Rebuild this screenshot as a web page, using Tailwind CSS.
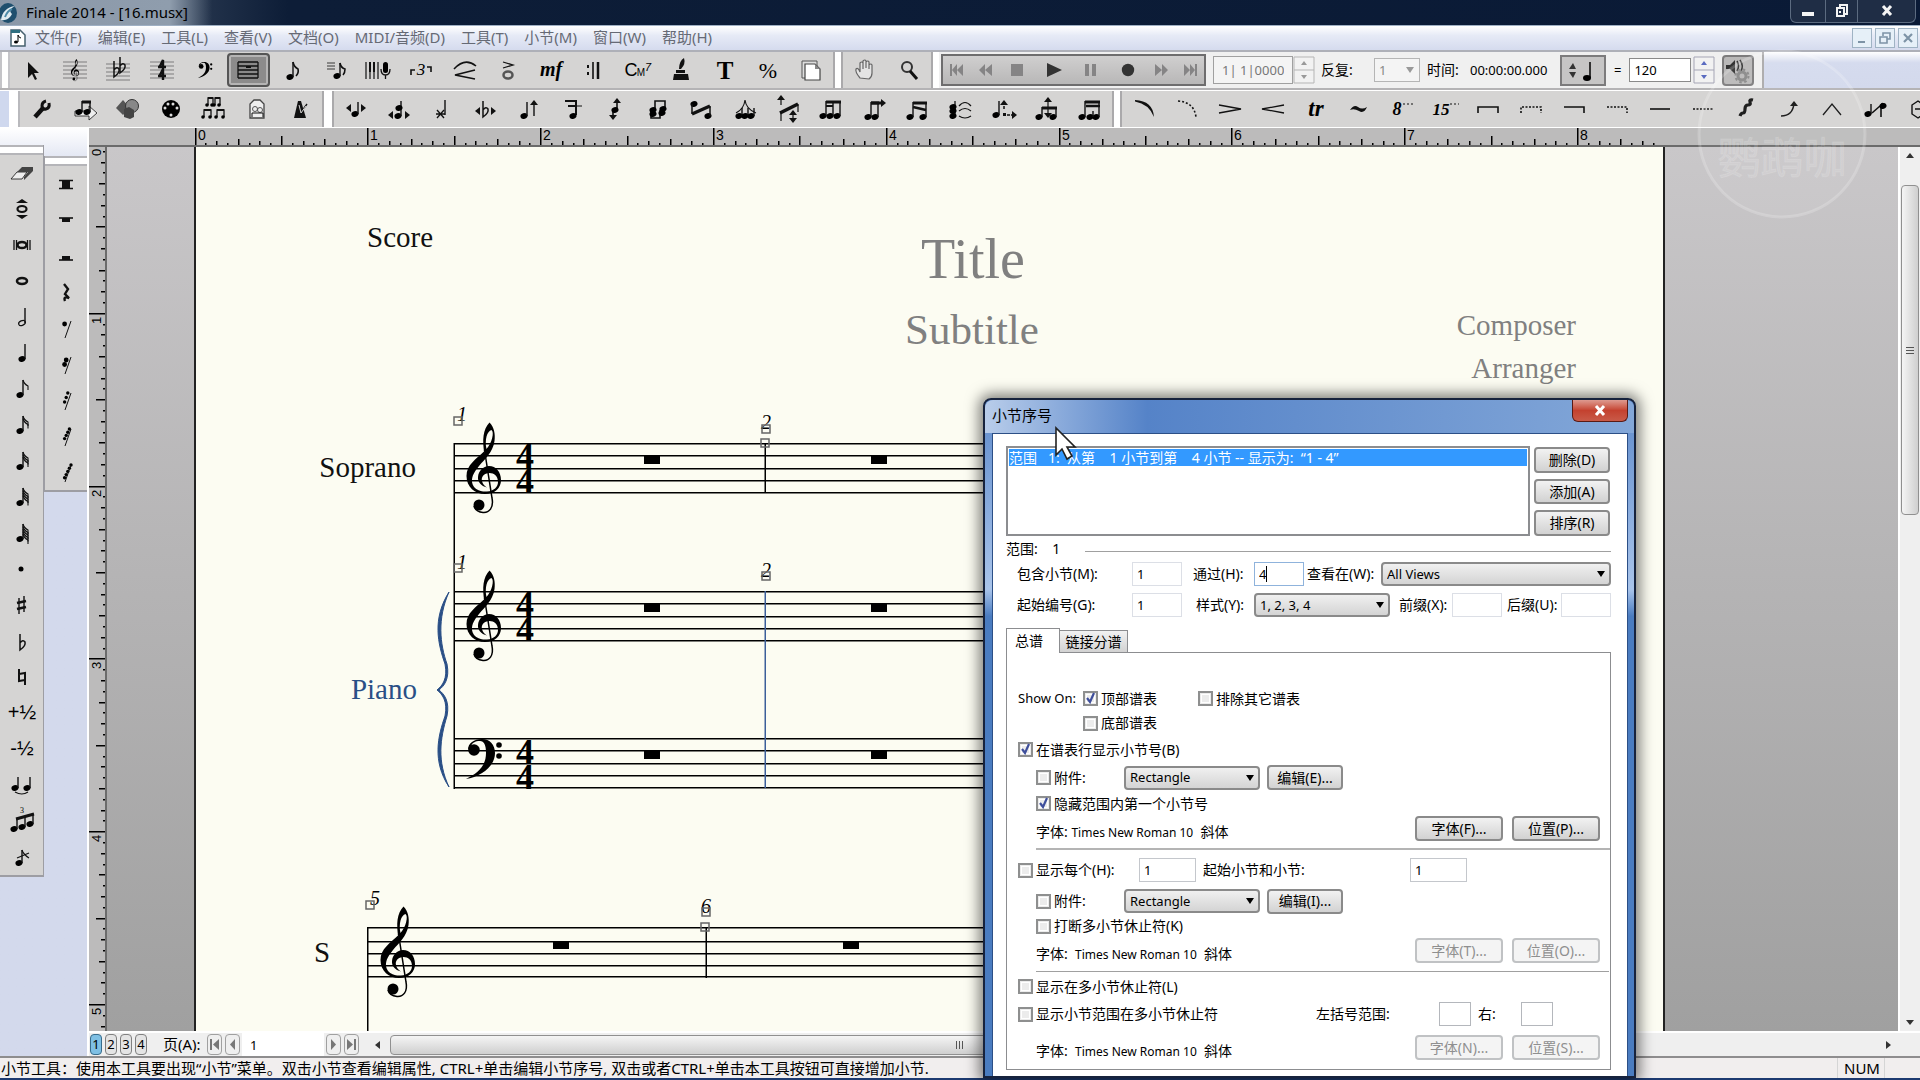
<!DOCTYPE html>
<html lang="zh-CN">
<head>
<meta charset="utf-8">
<title>Finale 2014 - [16.musx]</title>
<script src="https://cdn.jsdelivr.net/npm/@tailwindcss/browser@4"></script>
</head>
<body class="h-screen overflow-hidden relative flex flex-col bg-[#1d3a70] text-black text-sm whitespace-nowrap font-['Noto_Sans','Noto_Sans_CJK_SC',sans-serif]">

<!-- Title bar -->
<header class="h-[26px] shrink-0 flex items-center bg-gradient-to-r from-[#5d6b7d] via-[#0d1d37] via-15% to-[#0a1a36] border-b border-[#9fb0c4]">
  <div class="h-full flex items-center gap-2 pr-6 bg-gradient-to-r from-[#8b98a8] via-[#8f9dad] via-80% to-[#0d1d37]/0">
    <svg class="w-[18px] h-[22px]" viewBox="0 0 18 22"><ellipse cx="8" cy="11" rx="9" ry="10" fill="#1f4f6e"/><path d="M1 18C2 10 7 5 15 4C10 7 9 9 12 12C10 16 6 19 1 18Z" fill="#dfeaf0"/><path d="M5 15C7 10 9 8 12 7" stroke="#4d8aa8" fill="none" stroke-width="2"/></svg>
    <h1 class="text-[15px] font-['Noto_Sans',sans-serif]">Finale 2014 - [16.musx]</h1>
  </div>
  <div class="ml-auto mr-1 h-[23px] self-start flex rounded-b-md border border-t-0 border-[#5c6b80] bg-[#1f2d45] text-white">
    <button aria-label="最小化" class="w-[35px] border-r border-[#5c6b80] flex items-center justify-center"><svg class="w-4 h-4" viewBox="0 0 16 16"><path d="M2 9h12v4H2z" fill="#f4f4f4"/></svg></button>
    <button aria-label="还原" class="w-[32px] border-r border-[#5c6b80] flex items-center justify-center"><svg class="w-4 h-4" viewBox="0 0 16 16"><path d="M6 5V2h7v9h-2M3 5h7v8H3zM6 8v2" stroke="#f4f4f4" stroke-width="2" fill="none"/></svg></button>
    <button aria-label="关闭" class="w-[57px] flex items-center justify-center"><svg class="w-4 h-4" viewBox="0 0 16 16"><path d="M4 3l8 9M12 3l-8 9" stroke="#f4f4f4" stroke-width="3"/></svg></button>
  </div>
</header>

<!-- Menu bar -->
<nav class="h-[26px] shrink-0 flex items-center border-b-2 border-[#aeb0b8] bg-gradient-to-b from-white via-[#e6eaf6] via-40% to-[#d5dbee] text-[15px] text-[#666a75]">
  <svg class="ml-[10px] mr-[9px] w-4 h-[18px]" viewBox="0 0 16 18"><path d="M1 1h9l5 5v11H1z" fill="#fff" stroke="#46606e" stroke-width="1.5"/><path d="M1 1h9v3H1z" fill="#2f6f80"/><ellipse cx="6" cy="13" rx="2" ry="1.6"/><path d="M8 13V6q1 3 3 3" stroke="#000" fill="none"/></svg>
  <ul class="flex gap-4">
    <li><a href="#">文件(F)</a></li><li><a href="#">编辑(E)</a></li><li><a href="#">工具(L)</a></li><li><a href="#">查看(V)</a></li><li><a href="#">文档(O)</a></li><li><a href="#">MIDI/音频(D)</a></li><li><a href="#">工具(T)</a></li><li><a href="#">小节(M)</a></li><li><a href="#">窗口(W)</a></li><li><a href="#">帮助(H)</a></li>
  </ul>
  <div class="ml-auto mr-[2px] flex gap-[3px]">
    <button aria-label="最小化文档" class="w-5 h-5 border border-[#9fb3c4] bg-[#e6f0f8]"><svg viewBox="0 0 18 18"><path d="M5 12h7v2H5z" fill="#7d93a6"/></svg></button>
    <button aria-label="还原文档" class="w-5 h-5 border border-[#9fb3c4] bg-[#e6f0f8]"><svg viewBox="0 0 18 18"><path d="M7 7V4h7v6h-3M4 8h7v6H4z" stroke="#7d93a6" stroke-width="1.6" fill="none"/></svg></button>
    <button aria-label="关闭文档" class="w-5 h-5 border border-[#9fb3c4] bg-[#e6f0f8]"><svg viewBox="0 0 18 18"><path d="M5 5l8 8M13 5l-8 8" stroke="#7d93a6" stroke-width="2.2"/></svg></button>
  </div>
</nav>

<!-- Main tool row -->
<div class="h-[38px] shrink-0 flex bg-gradient-to-b from-white via-[#d5dbee] via-30% to-[#d3d9ec] border-b-2 border-[#b4b3b5]">
  <div class="w-[10px] shrink-0 border-x-2 border-[#c4c4c8] bg-white"></div>
  <div id="mainTools" class="w-[823px] shrink-0 flex bg-[#d5d4d3]"></div>
  <div class="w-[10px] shrink-0 border-x-2 border-[#aaa9ab] bg-white"></div>
  <div id="viewTools" class="w-[88px] shrink-0 flex bg-[#d5d4d3]"></div>
  <div class="w-[8px] shrink-0 border-l-2 border-[#aaa9ab] bg-white"></div>
  <div class="w-[825px] shrink-0 flex items-center bg-[#f0f0f0] border-r-2 border-[#aaa9ab] text-[13px]">
    <div id="playback" class="ml-[2px] w-[265px] h-[32px] flex items-center justify-center bg-gradient-to-b from-[#d0cfcf] to-[#b8b7b7] border-2 border-[#6e6d6e]"></div>
    <input aria-label="位置" value="1| 1|0000" class="ml-[7px] w-[80px] h-[28px] px-2 border border-[#a0a0a0] bg-[#f4f4f4] text-[13px] text-[#777]">
    <svg class="w-[22px] h-[28px]" viewBox="0 0 22 28"><path d="M1 1h20v26H1zM1 14h20" fill="#f2f2f2" stroke="#b5b5b5"/><path d="M8 9h6l-3-4zM8 19h6l-3 4z" fill="#999"/></svg>
    <label for="rep" class="ml-[6px] w-[53px] text-[14px]">反复:</label>
    <span class="relative w-[46px]"><select id="rep" class="appearance-none block w-full h-[24px] px-1 border border-[#b5b5b5] bg-[#f4f4f4] text-[#888]"><option>1</option></select><svg class="absolute right-[6px] top-[9px] w-2 h-[6px] pointer-events-none" viewBox="0 0 8 6"><path d="M0 0h8L4 6z" fill="#999"/></svg></span>
    <span class="ml-[7px] w-[43px] text-[14px]">时间:</span><span class="w-[90px]">00:00:00.000</span>
    <button aria-label="速度单位" class="w-[46px] h-[31px] bg-[#c6c5c5] border-2 border-[#7c7b7c]"><svg viewBox="0 0 42 27"><path d="M7 12h7l-3-6zM7 15h7l-3 6z" fill="#333"/><ellipse cx="25" cy="21" rx="4" ry="3"/><path d="M28 21V5" stroke="#000" stroke-width="1.5"/></svg></button>
    <label for="tempo" class="mx-2">=</label>
    <input id="tempo" value="120" class="w-[62px] h-[24px] px-1 border border-[#8a8a8a] bg-white text-[13px]">
    <svg class="w-[22px] h-[28px] ml-[2px]" viewBox="0 0 22 28"><path d="M1 1h20v26H1zM1 14h20" fill="#f2f2f2" stroke="#a5a5b5"/><path d="M8 9h6l-3-4zM8 19h6l-3 4z" fill="#5a6bc0"/></svg>
    <button aria-label="播放设置" class="ml-[7px] w-[32px] h-[31px] bg-[#b9b8b8] border-2 border-[#7c7b7c] rounded-sm"><svg viewBox="0 0 28 27"><path d="M2 8h4l5-5v14l-5-5H2z" fill="#333"/><path d="M13 4q3 5 0 10M16 3q4 6 1 11" stroke="#333" fill="none" stroke-width="1.5"/><circle cx="18" cy="19" r="4" fill="none" stroke="#888" stroke-width="3"/><circle cx="18" cy="19" r="6.5" fill="none" stroke="#888" stroke-width="2" stroke-dasharray="2.5 2.6"/></svg></button>
  </div>
</div>

<!-- Second tool row -->
<div class="h-[38px] shrink-0 flex bg-[#d3d9ec] border-y border-white">
  <div class="w-[20px] shrink-0 border-r-2 border-[#b9b9bd] bg-gradient-to-r from-[#cfd8ee] from-50% to-white to-50%"></div>
  <div id="advTools" class="w-[302px] shrink-0 flex bg-[#d5d4d3]"></div>
  <div class="w-[12px] shrink-0 border-x-2 border-[#aaa9ab] bg-white"></div>
  <div id="specialTools" class="w-[778px] shrink-0 flex bg-[#d5d4d3]"></div>
  <div class="w-[10px] shrink-0 border-x-2 border-[#aaa9ab] bg-white"></div>
  <div id="shapeTools" class="flex-1 min-w-0 flex overflow-hidden bg-[#d5d4d3]"></div>
</div>

<main class="flex-1 min-h-0 flex">
  <!-- Palettes -->
  <aside class="w-[89px] shrink-0 flex items-start bg-gradient-to-b from-white to-[#d3d9ec] to-5% border-r-2 border-white">
    <div class="w-[44px] mt-[17px] border-r border-b-2 border-[#9d9da3] bg-[#d5d4d3]">
      <div class="h-[10px] border-y-2 border-[#b5b5b9] bg-white"></div>
      <div id="notes" class="flex flex-col"></div>
    </div>
    <div class="flex-1 mt-[28px] border-l border-b-2 border-[#9d9da3] bg-[#d5d4d3]">
      <div class="h-[10px] border-y-2 border-[#b5b5b9] bg-white"></div>
      <div id="rests" class="flex flex-col"></div>
    </div>
  </aside>

  <section class="flex-1 min-w-0 flex flex-col">
    <div class="h-[19px] shrink-0 bg-[#bcbbbb] border-b-2 border-[#6b6b6b] overflow-hidden"><svg id="hr" class="block w-[1831px] h-5 font-['Liberation_Sans']"></svg></div>
    <div class="flex-1 min-h-0 flex">
      <div class="w-[18px] shrink-0 bg-[#bcbbbb] border-r-2 border-[#6b6b6b] overflow-hidden"><svg id="vr" class="block w-[18px] h-[885px] font-['Liberation_Sans']"></svg></div>
      <!-- Score sheet -->
      <div class="flex-1 min-w-0 overflow-hidden bg-gradient-to-b from-[#c9c7c9] to-[#a0a0a0]">
        <div class="ml-[87px] w-[1471px] h-full overflow-hidden bg-[#fcfcf2] border-x-2 border-[#222]">
          <svg id="score" class="block w-[1467px] h-[885px] font-['Liberation_Serif']" viewBox="196 148 1467 885"></svg>
        </div>
      </div>
      <div class="w-[22px] shrink-0 flex flex-col items-center bg-[#efefef] border-l-2 border-white">
        <svg class="w-5 h-[38px]" viewBox="0 0 20 38"><path d="M6 11h8l-4-5z" fill="#333"/></svg>
        <div class="w-[18px] h-[330px] rounded-sm border border-[#909090] bg-gradient-to-r from-[#f5f5f5] to-[#cfcfcf] flex flex-col items-center justify-center gap-[2px]"><i class="w-2 h-px bg-[#555]"></i><i class="w-2 h-px bg-[#555]"></i><i class="w-2 h-px bg-[#555]"></i></div>
        <svg class="mt-auto w-5 h-[20px]" viewBox="0 0 20 20"><path d="M6 9h8l-4 5z" fill="#333"/></svg>
      </div>
    </div>
    <div class="h-[25px] shrink-0 flex items-center border-t-2 border-white bg-[#efefef] text-[13px]">
      <div class="flex gap-[3px] pl-px">
        <button class="w-3 h-[21px] rounded-sm border border-[#3a6d8c] bg-[#7fc0e4]">1</button><button class="w-3 h-[21px] rounded-sm border border-[#808080] bg-[#e4e4e4]">2</button><button class="w-3 h-[21px] rounded-sm border border-[#808080] bg-[#e4e4e4]">3</button><button class="w-3 h-[21px] rounded-sm border border-[#808080] bg-[#e4e4e4]">4</button>
      </div>
      <label for="page" class="ml-4 w-[44px] text-[15px]">页(A):</label>
      <button aria-label="第一页" class="w-[15px] h-[21px] rounded-sm border border-[#a0a0a0]"><svg viewBox="0 0 13 19"><path d="M3 4v11" stroke="#777" stroke-width="2"/><path d="M11 4v11L5 9.5z" fill="#777"/></svg></button>
      <button aria-label="上一页" class="ml-[3px] w-[15px] h-[21px] rounded-sm border border-[#a0a0a0]"><svg viewBox="0 0 13 19"><path d="M9 4v11L4 9.5z" fill="#777"/></svg></button>
      <input id="page" value="1" class="ml-[2px] w-[82px] h-[23px] px-2 bg-white">
      <button aria-label="下一页" class="ml-[2px] w-[15px] h-[21px] rounded-sm border border-[#a0a0a0]"><svg viewBox="0 0 13 19"><path d="M4 4v11l5-5.5z" fill="#777"/></svg></button>
      <button aria-label="最后一页" class="ml-[3px] w-[15px] h-[21px] rounded-sm border border-[#a0a0a0]"><svg viewBox="0 0 13 19"><path d="M10 4v11" stroke="#777" stroke-width="2"/><path d="M2 4v11l6-5.5z" fill="#777"/></svg></button>
      <svg class="ml-[9px] w-[22px] h-5" viewBox="0 0 22 20"><path d="M12 6v8l-5-4z" fill="#333"/></svg>
      <div class="w-[1138px] h-[20px] rounded-sm border border-[#909090] bg-gradient-to-b from-[#f5f5f5] to-[#cfcfcf] flex items-center justify-center gap-[2px]"><i class="w-px h-2 bg-[#555]"></i><i class="w-px h-2 bg-[#555]"></i><i class="w-px h-2 bg-[#555]"></i></div>
      <svg class="ml-auto mr-[22px] w-[20px] h-5" viewBox="0 0 20 20"><path d="M8 6v8l5-4z" fill="#333"/></svg>
    </div>
  </section>
</main>

<footer class="h-[22px] mb-[2px] shrink-0 flex items-center bg-[#f1eeee] border-t-2 border-[#8e8d8e] text-[15px] leading-5">
  <p class="pl-px">小节工具：使用本工具要出现“小节”菜单。双击小节查看编辑属性, CTRL+单击编辑小节序号, 双击或者CTRL+单击本工具按钮可直接增加小节.</p>
  <span class="ml-auto w-[48px] mr-[35px] pl-[6px] border-x border-[#d5d5d5]">NUM</span>
</footer>

<!-- Watermark -->
<svg class="absolute right-[52px] top-[30px] w-[172px] h-[192px] pointer-events-none font-['Noto_Sans_CJK_SC']" viewBox="0 0 172 192"><circle cx="86" cy="104" r="83" fill="#fff" fill-opacity=".06" stroke="#fff" stroke-opacity=".2" stroke-width="3"/><text x="86" y="144" font-size="43" text-anchor="middle" fill="#fff" fill-opacity=".14" stroke="#fff" stroke-opacity=".12">鹦鹉咖</text></svg>

<!-- Measure number dialog -->
<div role="dialog" aria-label="小节序号" class="absolute left-[983px] top-[398px] bottom-[2px] w-[653px] flex flex-col rounded-t-lg border-2 border-[#17233d] bg-gradient-to-b from-[#5f8bcb] via-[#a9c4ea] via-28% to-[#4a7cc0] to-32% shadow-[0_0_14px_4px_rgba(0,0,0,0.5)]">
  <div class="h-[33px] shrink-0 flex items-start rounded-t-lg bg-gradient-to-r from-[#b9cdea] via-[#5583c8] via-25% to-[#83a7d8]">
    <h2 class="pl-[7px] pt-[3px] text-[15px] leading-6">小节序号</h2>
    <button aria-label="关闭对话框" class="ml-auto mr-[6px] w-[56px] h-[22px] rounded-b-md border border-t-0 border-[#5a1a14] bg-gradient-to-b from-[#dd9a90] via-[#c4412f] via-50% to-[#c85a48] flex items-center justify-center"><svg class="w-4 h-4" viewBox="0 0 16 16"><path d="M4 3l8 9M12 3l-8 9" stroke="#fff" stroke-width="3"/></svg></button>
  </div>
  <div class="ml-[7px] mr-[6px] flex-1 min-h-0 bg-white border-x border-t border-[#2c4f86] pl-[13px] pr-[16px] pt-3 overflow-hidden">
    <div class="flex justify-between h-[90px] pr-px">
      <div role="listbox" class="w-[524px] border-2 border-[#8c8d90] p-px">
        <div role="option" aria-selected="true" class="h-[17px] bg-[#3399ff] text-white leading-[17px] whitespace-pre">范围   1:  从第    1 小节到第    4 小节 -- 显示为:  “1 - 4”</div>
      </div>
      <div class="flex flex-col gap-[6px] pt-px">
        <button class="w-[76px] h-[26px] rounded-sm border-2 border-[#8a8a8a] bg-gradient-to-b from-[#f2f2f2] to-[#d2d2d2] leading-5">删除(D)</button>
        <button class="w-[76px] h-[26px] rounded-sm border-2 border-[#8a8a8a] bg-gradient-to-b from-[#f2f2f2] to-[#d2d2d2] leading-5">添加(A)</button>
        <button class="w-[76px] h-[26px] rounded-sm border-2 border-[#8a8a8a] bg-gradient-to-b from-[#f2f2f2] to-[#d2d2d2] leading-5">排序(R)</button>
      </div>
    </div>
    <div class="h-[26px] flex items-center"><span class="w-[79px] whitespace-pre">范围:    1</span><i class="flex-1 h-px mt-1 bg-[#a0a0a0]"></i></div>
    <div class="h-6 flex items-center pl-[11px]">
      <label for="inc" class="w-[115px]">包含小节(M):</label><input id="inc" value="1" class="w-[50px] h-6 px-1 border border-[#dcdfe6] text-[13px]">
      <label for="thr" class="ml-[11px] w-[61px]">通过(H):</label><span class="relative w-[50px]"><input id="thr" value="4" class="block w-full h-6 px-1 border border-[#8fb3dc] text-[13px]"><i class="absolute left-3 top-1 w-px h-4 bg-black"></i></span>
      <label for="view" class="ml-[3px] w-[74px]">查看在(W):</label>
      <span class="relative flex-1"><select id="view" class="appearance-none block w-full h-6 px-1 rounded-sm border-2 border-[#8a8a8a] bg-gradient-to-b from-[#f0f0f0] to-[#d4d4d4] text-[13px]"><option>All Views</option></select><svg class="absolute right-[6px] top-[9px] w-2 h-[6px] pointer-events-none" viewBox="0 0 8 6"><path d="M0 0h8L4 6z"/></svg></span>
    </div>
    <div class="mt-[7px] h-6 flex items-center pl-[11px]">
      <label for="st" class="w-[115px]">起始编号(G):</label><input id="st" value="1" class="w-[50px] h-6 px-1 border border-[#dcdfe6] text-[13px]">
      <label for="sty" class="ml-[14px] w-[58px]">样式(Y):</label>
      <span class="relative w-[136px]"><select id="sty" class="appearance-none block w-full h-6 px-1 rounded-sm border-2 border-[#8a8a8a] bg-gradient-to-b from-[#f0f0f0] to-[#d4d4d4] text-[13px]"><option>1, 2, 3, 4</option></select><svg class="absolute right-[6px] top-[9px] w-2 h-[6px] pointer-events-none" viewBox="0 0 8 6"><path d="M0 0h8L4 6z"/></svg></span>
      <label for="pre" class="ml-[9px] w-[53px]">前缀(X):</label><input id="pre" class="w-[50px] h-6 px-1 border border-[#dcdfe6]">
      <label for="suf" class="ml-[5px] w-[54px]">后缀(U):</label><input id="suf" class="w-[50px] h-6 px-1 border border-[#dcdfe6]">
    </div>
    <div role="tablist" class="mt-[11px] h-6 flex items-end relative z-10">
      <button role="tab" class="w-[54px] h-[25px] -mb-px border border-b-0 border-[#8c8d90] bg-white pr-2">总谱</button>
      <button role="tab" class="w-[68px] h-[22px] border border-l-0 border-b-0 border-[#8c8d90] bg-gradient-to-b from-[#f2f2f2] to-[#d2d2d2] leading-5">链接分谱</button>
    </div>
    <div role="tabpanel" class="h-[418px] border border-[#8c8d90] pl-[11px] pt-[33px]">
      <div class="h-[25px] flex items-center"><span class="w-[65px] text-[13px]">Show On:</span><label class="w-[115px] flex items-center gap-[3px]"><input type="checkbox" checked class="ck">顶部谱表</label><label class="flex items-center gap-[3px]"><input type="checkbox" class="ck">排除其它谱表</label></div>
      <div class="h-6 flex items-center pl-[65px]"><label class="flex items-center gap-[3px]"><input type="checkbox" class="ck">底部谱表</label></div>
      <div class="h-[29px] flex items-center"><label class="flex items-center gap-[3px]"><input type="checkbox" checked class="ck">在谱表行显示小节号(B)</label></div>
      <div class="h-[27px] flex items-center pl-[18px]"><label class="w-[88px] flex items-center gap-[3px]"><input type="checkbox" class="ck">附件:</label>
        <span class="relative w-[136px]"><select aria-label="附件形状" class="appearance-none block w-full h-6 px-1 rounded-sm border-2 border-[#8a8a8a] bg-gradient-to-b from-[#f0f0f0] to-[#d4d4d4] text-[13px]"><option>Rectangle</option></select><svg class="absolute right-[6px] top-[9px] w-2 h-[6px] pointer-events-none" viewBox="0 0 8 6"><path d="M0 0h8L4 6z"/></svg></span>
        <button class="ml-[7px] w-[76px] h-[25px] rounded-sm border-2 border-[#8a8a8a] bg-gradient-to-b from-[#f2f2f2] to-[#d2d2d2] leading-5">编辑(E)...</button></div>
      <div class="h-[25px] flex items-center pl-[18px]"><label class="flex items-center gap-[3px]"><input type="checkbox" checked class="ck">隐藏范围内第一个小节号</label></div>
      <div class="h-8 flex pl-[18px] pr-[10px]"><p class="leading-8 whitespace-pre">字体: <span class="text-xs leading-8">Times New Roman 10</span>  斜体</p>
        <button class="ml-auto w-[88px] h-[25px] rounded-sm border-2 border-[#8a8a8a] bg-gradient-to-b from-[#f2f2f2] to-[#d2d2d2] leading-5">字体(F)...</button>
        <button class="ml-[9px] w-[88px] h-[25px] rounded-sm border-2 border-[#8a8a8a] bg-gradient-to-b from-[#f2f2f2] to-[#d2d2d2] leading-5">位置(P)...</button></div>
      <div class="ml-[18px] h-[2px] bg-[#b4b4b4]"></div>
      <div class="mt-[7px] h-[26px] flex items-center"><label for="ev" class="w-[121px] flex items-center gap-[3px]"><input type="checkbox" class="ck">显示每个(H):</label><input id="ev" value="1" class="w-[57px] h-6 px-1 border border-[#c4c7cc] text-[13px]"><label for="from" class="ml-[7px] w-[207px]">起始小节和小节:</label><input id="from" value="1" class="w-[57px] h-6 px-1 border border-[#c4c7cc] text-[13px]"></div>
      <div class="mt-[5px] h-[26px] flex items-center pl-[18px]"><label class="w-[88px] flex items-center gap-[3px]"><input type="checkbox" class="ck">附件:</label>
        <span class="relative w-[136px]"><select aria-label="附件形状二" class="appearance-none block w-full h-6 px-1 rounded-sm border-2 border-[#8a8a8a] bg-gradient-to-b from-[#f0f0f0] to-[#d4d4d4] text-[13px]"><option>Rectangle</option></select><svg class="absolute right-[6px] top-[9px] w-2 h-[6px] pointer-events-none" viewBox="0 0 8 6"><path d="M0 0h8L4 6z"/></svg></span>
        <button class="ml-[7px] w-[76px] h-[25px] rounded-sm border-2 border-[#8a8a8a] bg-gradient-to-b from-[#f2f2f2] to-[#d2d2d2] leading-5">编辑(I)...</button></div>
      <div class="h-6 flex items-center pl-[18px]"><label class="flex items-center gap-[3px]"><input type="checkbox" class="ck">打断多小节休止符(K)</label></div>
      <div class="h-[33px] flex pl-[18px] pr-[10px]"><p class="leading-8 whitespace-pre">字体:  <span class="text-xs leading-8">Times New Roman 10</span>  斜体</p>
        <button disabled class="ml-auto w-[88px] h-[25px] rounded-sm border-2 border-[#c0c2c4] bg-[#f4f4f4] text-[#8f8f8f] leading-5">字体(T)...</button>
        <button disabled class="ml-[9px] w-[88px] h-[25px] rounded-sm border-2 border-[#c0c2c4] bg-[#f4f4f4] text-[#8f8f8f] leading-5">位置(O)...</button></div>
      <div class="ml-[18px] mr-px h-px bg-[#a0a0a0]"></div>
      <div class="h-[29px] flex items-center"><label class="flex items-center gap-[3px]"><input type="checkbox" class="ck">显示在多小节休止符(L)</label></div>
      <div class="h-[26px] flex items-center"><label class="w-[298px] flex items-center gap-[3px]"><input type="checkbox" class="ck">显示小节范围在多小节休止符</label><label for="lb" class="w-[123px]">左括号范围:</label><input id="lb" class="w-8 h-6 border border-[#b4b7bc]"><label for="rb" class="ml-[7px] w-[43px]">右:</label><input id="rb" class="w-8 h-6 border border-[#b4b7bc]"></div>
      <div class="mt-2 h-[33px] flex pl-[18px] pr-[10px]"><p class="leading-8 whitespace-pre">字体:  <span class="text-xs leading-8">Times New Roman 10</span>  斜体</p>
        <button disabled class="ml-auto w-[88px] h-[25px] rounded-sm border-2 border-[#c0c2c4] bg-[#f4f4f4] text-[#8f8f8f] leading-5">字体(N)...</button>
        <button disabled class="ml-[9px] w-[88px] h-[25px] rounded-sm border-2 border-[#c0c2c4] bg-[#f4f4f4] text-[#8f8f8f] leading-5">位置(S)...</button></div>
    </div>
  </div>
</div>

<!-- Pointer -->
<svg class="absolute left-[1054px] top-[426px] w-6 h-9 pointer-events-none" viewBox="0 0 24 36"><path d="M2 2v27l6-6 5 10 5-3-5-9h8z" fill="#fff" stroke="#222" stroke-width="1.6"/></svg>

<script>
const $ = id => document.getElementById(id);
document.querySelectorAll('.ck').forEach(c => { c.className = 'appearance-none w-[15px] h-[15px] shrink-0 border-2 border-[#8e8f8f] bg-[#ececec] outline outline-1 -outline-offset-4 outline-white'; 
  if (c.checked) { const w = document.createElement('span'); w.className = 'relative flex'; c.replaceWith(w); w.append(c); w.insertAdjacentHTML('beforeend', '<svg class="absolute left-[2px] top-[1px] w-3 h-3 pointer-events-none" viewBox="0 0 12 12"><path d="M2 6l3 4 4-9" fill="none" stroke="#3f4f9c" stroke-width="2.2"/></svg>'); } });

const P = (d, w = 1.6, x = '') => `<path d="${d}" fill="none" stroke="#111" stroke-width="${w}" ${x}/>`;
const F = (d, c = '#111') => `<path d="${d}" fill="${c}"/>`;
const H = (x, y) => `<ellipse cx="${x}" cy="${y}" rx="3.6" ry="2.8" transform="rotate(-20 ${x} ${y})"/>`;
const N = (x, y, l) => H(x, y) + P(`M${x + 3} ${y}V${y - l}`, 1.4);
const T = (t, x, y, s, a = '') => `<text x="${x}" y="${y}" font-size="${s}" text-anchor="middle" ${a}>${t}</text>`;
const L5 = () => [8, 12, 16, 20, 24].map(y => P(`M8 ${y}h24`, 1, 'opacity=".45"')).join('');
const tip = { l: (x, y) => F(`M${x} ${y}l5-4v8z`), r: (x, y) => F(`M${x} ${y}l-5-4v8z`), u: (x, y) => F(`M${x} ${y}l-4 5h8z`), d: (x, y) => F(`M${x} ${y}l-4-5h8z`) };
const clef = 'M17.500 32C15 18 16 7 22.500 .5C27 5 28.500 12 27.500 19C26 30 18 37 12 44C8 49 4.500 54 5 60C6 67 13 70 20 69.500C27 69 31 65 31 60C31 54 27 51 22.500 51C17 51 14 55 15 59C15.500 62 17.500 64 20 65.500C14 64 10.500 60 11 55C11.500 49 16 44 22 44C29 44 34 50 34 58C34 66 28 72 18 72C8 72 -.5 65 -.5 54C-.5 43 9 37 17.500 29ZM19.500 27C17.500 18 20 9 24.500 8C27.500 10 25 21 19.500 27Z';
const treble = (x, y, s = 1) => `<g transform="translate(${x} ${y}) scale(${s})"><path d="${clef}" fill-rule="evenodd"/><path d="M17.500 28L25 76C27 86 22 91 16 90.500C11 90 8 88 7 84" fill="none" stroke="#000" stroke-width="1.500"/><circle cx="12" cy="83" r="5.500"/></g>`;
const bass = (x, y, s = 1) => `<g transform="translate(${x} ${y}) scale(${s})"><path d="M2 11C2 4 8 0 16 0C24 0 29 6 29 14C29 28 14 38 0 40C12 34 20 27 20 14C20 6 18 2 14 2C9 2 6 4 5 7Z"/><circle cx="8" cy="11" r="5.800"/><circle cx="33" cy="6" r="2.800"/><circle cx="33" cy="17" r="2.800"/></g>`;
const flat = (x, y) => P(`M${x} ${y - 12}V${y + 4}q6-4 5-8q-2-3-5 1`, 1.5);
const beam = (a, y = 7, e = 24, w = 3) => a.map(x => N(x, e, e - y)).join('') + P(`M${a[0] + 3} ${y + 1}H${a[a.length - 1] + 4}`, w);
const B = (id, list, cls) => $(id).innerHTML = list.map(([n, s, c]) => `<button aria-label="${n}" class="${c || cls}"><svg class="w-10 h-8 shrink-0 font-['Liberation_Serif']" viewBox="0 0 40 32">${s}</svg></button>`).join('');
const cell = 'flex-1 min-w-0 flex items-center justify-center';

B('mainTools', [
 ['选择', F('M16 8v16l4-4 3 6 2-1-3-6h5z')],
 ['谱表', L5() + treble(16, 5, .24)],
 ['调号', [10, 14, 18, 22, 26].map(y => P(`M8 ${y}h24`, 1, 'opacity=".45"')).join('') + flat(16, 19) + flat(22, 15)],
 ['拍号', L5() + P('M17 14l4-8v9M16 13h8M17 23l4-8v11M16 22h8', 2.4)],
 ['谱号', bass(13, 8, .4)],
 ['小节', '<path d="M11 8h18v16H11z" fill="#8a8989"/>' + P('M10 8h20M10 12h20M10 16h20M10 20h20M10 24h20M10 8v16M30 8v16', 1.3) + F('M18 12h5v2h-5z'), 'w-[43px] h-[34px] my-px shrink-0 flex items-center justify-center rounded border-2 border-[#555] bg-[#8c8b8b] ring-2 ring-inset ring-[#b5b4b4]'],
 ['简易输入', N(19, 23, 15) + P('M22 8q1 5 5 7q1 4-2 7')],
 ['快速输入', N(22, 22, 13) + P('M25 9q1 5 5 6q0 4-2 6') + P('M12 9h8M12 12h8M12 15h8', .8)],
 ['乐器输入', P('M8 8v17M12 8v17M16 8v17M20 8v17', 1.2) + F('M11 8h2v10h-2zM15 8h2v10h-2z') + '<rect x="25" y="8" width="5" height="11" rx="2.500"/>' + P('M23 15q0 6 4.500 6t4.500-6M27.500 21v4', 1.3)],
 ['连音', T('3', 20, 21, 17, 'font-style="italic"') + P('M10 21v-5h4M26 13h4v5')],
 ['智能图形', P('M9 15Q20 3 31 12') + P('M30 16L10 21L30 25')],
 ['演奏记号', P('M15 8l10 3-10 3', 1.2) + '<ellipse cx="20" cy="21" rx="4.500" ry="3.500" fill="none" stroke="#555" stroke-width="2.500"/>'],
 ['表情', T('mf', 20, 22, 20, 'font-style="italic" font-weight="bold"')],
 ['反复', F('M12 11h2v3h-2zM12 18h2v3h-2z') + P('M18 8v17', 1.6) + P('M23 8v17', 2.5)],
 ['和弦', T('C', 13, 22, 18, `font-family="Liberation Sans"`) + T('M', 23, 22, 10, `font-family="Liberation Sans"`) + T('7', 30, 17, 11, `font-family="Liberation Sans" font-style="italic"`)],
 ['歌词', F('M13 20h14l1 6H12z') + F('M15 16h9v3h-9z') + F('M18 15Q18 7 23 4q2 6-3 11z')],
 ['文本', T('T', 20, 25, 25, 'font-weight="bold"')],
 ['缩放大小', T('%', 20, 24, 22)],
 ['页面', '<path d="M11 7h15v17H11z" fill="#ddd" stroke="#555"/><path d="M14 10h10l5 5v11H14z" fill="#fff" stroke="#444" stroke-width="1.200"/><path d="M24 10v5h5" fill="#888"/>']
], cell);
B('viewTools', [
 ['手形', '<path d="M15 24q-5-6-4-9q2-2 4 3v-9q2-2 3 0v6V7q2-2 3 0v7V8q2-2 3 0v7v-4q2-2 3 0v8q0 4-3 6z" fill="#e4e4e4" stroke="#666" stroke-width="1.200"/>'],
 ['缩放', '<circle cx="18" cy="13" r="5" fill="none" stroke="#333" stroke-width="2"/>' + P('M21 17l7 8', 3)]
], cell);
const g = '#858485', dk = '#333';
$('playback').innerHTML = [
 ['跳到开头', F('M2 3h2v12H2zM9 3v12L4 9zM15 3v12L9 9z', g), 'w-[26px]'], ['后退', F('M9 3v12L3 9zM16 3v12L9 9z', g), 'w-[30px]'], ['停止', F('M3 3h12v12H3z', g), 'w-[34px]'],
 ['播放', F('M2 2v14l15-7z', dk), 'w-[40px]'], ['暂停', F('M3 3h4v12H3zM10 3h4v12h-4z', g), 'w-[34px]'], ['录音', '<circle cx="9" cy="9" r="6.200" fill="#333"/>', 'w-[40px]'],
 ['前进', F('M2 3v12l7-6zM9 3v12l6-6z', g), 'w-[28px]'], ['跳到末尾', F('M3 3v12l6-6zM9 3v12l5-6zM14 3h2v12h-2z', g), 'w-[28px]']
].map(([n, s, w]) => `<button aria-label="${n}" class="${w} flex items-center justify-center"><svg class="w-[18px] h-[18px]" viewBox="0 0 18 18">${s}</svg></button>`).join('');

B('advTools', [
 ['特殊工具', P('M13 24l9-10', 4.5) + P('M27 10q1 5-3 6t-4-3q0-4 4-5', 3)],
 ['镜像', F('M10 18h14v-5l9 7-9 7v-4H10z', '#eee') + P('M10 18h14v-5l8 7-8 7v-4H10z', .8) + beam([14, 22], 8, 19)],
 ['图形', F('M8 15l7-8 7 8-7 7z', '#555') + '<circle cx="24" cy="13" r="6.500" fill="#888" stroke="#333"/>' + F('M16 16l5-2 5 3v7l-4 2-6-2z', '#444')],
 ['和弦音', '<circle cx="20" cy="16" r="9"/>' + [[14, 15], [17, 11], [22, 11], [26, 15], [20, 22]].map(a => `<circle cx="${a[0]}" cy="${a[1]}" r="1.500" fill="#ddd"/>`).join('')],
 ['音符移动', [[13, 5, 5], [20, 5, 5], [9, 17, 7], [22, 17, 7]].map(([x, y, w]) => P(`M${x + 1} ${y + 7}V${y}h${w}v7`, 1.3) + P(`M${x + 1} ${y}h${w}`, 2) + `<circle cx="${x}" cy="${y + 7}" r="1.800"/><circle cx="${x + w}" cy="${y + 7}" r="1.800"/>`).join('')],
 ['OLE', '<path d="M13 25V11l4-4h6l4 4v14z" fill="#eee" stroke="#444" stroke-width="1.300"/><circle cx="18" cy="16" r="2.500" fill="none" stroke="#555"/><circle cx="23" cy="17" r="2.500" fill="none" stroke="#555"/>' + P('M15 24v-4h11v4', 1)],
 ['节拍', F('M14 25l4-17h3l5 17z') + P('M19 22l8-11M17 19h7', 1.3) + '<path d="M19 12l2 8 5-7" fill="none" stroke="#d5d4d3"/>']
], cell);
B('specialTools', [
 ['音符位置', N(19, 21, 12) + tip.l(10, 15) + tip.r(30, 15)],
 ['符头位置', N(19, 23, 15) + H(20, 15) + tip.l(9, 22) + tip.r(31, 22)],
 ['音符形状', P('M23 7v15', 1.4) + P('M15 17l7 8M22 17l-7 8M14 21h9', 1.3)],
 ['变音位置', flat(18, 20) + tip.l(10, 18) + tip.r(31, 18)],
 ['符杆长度', N(16, 23, 14) + P('M26 23V9', 1.4) + tip.u(26, 7)],
 ['符杆反转', P('M13 8h11v14M16 13h8', 2) + P('M24 13h6', 1) + H(21, 23)],
 ['双符杆', P('M22 8v9h-4v7', 1.6) + H(20, 17) + tip.u(22, 5) + tip.d(18, 27)],
 ['反转符杆', P('M17 18V8h10v8M13 17v8h9v-8', 1.6) + H(15, 17) + H(25, 16) + H(15, 21) + H(24, 20)],
 ['打断符杠', H(13, 11) + H(27, 23) + P('M11 21L29 13', 3.5) + P('M11 11v10M29 13v10', 1.5)],
 ['符杠延伸', N(14, 23, 8) + N(20, 23, 8) + N(26, 23, 8) + P('M11 20Q19 16 20 7Q21 16 31 20', 1.1)],
 ['符杠角度', P('M12 20L30 11', 3.5) + P('M13 19v9M30 11v8M13 5v7M25 20v8', 1.2) + tip.u(13, 2) + tip.d(25, 30) + tip.u(25, 17)],
 ['次级符杠', beam([12, 19, 26], 8, 23) + P('M15 13h7', 2)],
 ['符杠延长', beam([14, 21], 9, 24) + P('M17 10h10', 3) + tip.r(32, 10)],
 ['符杠粗细', beam([13, 26], 9, 24) + P('M16 14l13 3', 2.5)],
 ['延音连线', P('M14 8v16', 1.3) + H(12, 14) + H(12, 18) + H(12, 23) + P('M18 13q6-7 12 0M18 18q6-5 12 0M18 23q6 4 12 0', 1.2)],
 ['附点', N(12, 22, 14) + P('M20 16v-6M23 22h7', 1.5, 'stroke-dasharray="3 1"') + F('M19 20h3v3h-3z') + tip.u(20, 7) + tip.r(33, 22)],
 ['符杠高度', beam([12, 26], 14, 24) + tip.u(21, 4) + tip.d(21, 25) + P('M21 7v15', 1.2)],
 ['符杠样式', beam([12, 26], 8, 24) + P('M16 13h14', 2.5) + N(20, 24, 6)]
], cell);
B('shapeTools', [
 ['连线', F('M11 7Q29 8 30 24Q25 11 11 8.500z')], ['虚连线', P('M11 8Q27 9 29 24', 1.6, 'stroke-dasharray="2 2"')],
 ['减弱', P('M9 12l22 4-22 4', 1.3)], ['渐强', P('M31 12L9 16l22 4', 1.3)],
 ['颤音', T('tr', 20, 23, 23, 'font-style="italic" font-weight="bold"')], ['波音', F('M11 17q4-6 8-3t9 0q-3 7-8 4t-9-1z')],
 ['八度', T('8', 15, 22, 18, 'font-style="italic" font-weight="bold"') + P('M21 11h10', 1, 'stroke-dasharray="2 2"')],
 ['十五度', T('15', 16, 22, 17, 'font-style="italic" font-weight="bold"') + P('M25 11h9', 1, 'stroke-dasharray="2 2"')],
 ['括线', P('M10 20v-6h20v6')], ['虚括线', P('M10 20v-6h20v6', 1.6, 'stroke-dasharray="2 1.500"')],
 ['右括线', P('M10 14h20v6')], ['虚右括线', P('M10 14h20v6', 1.6, 'stroke-dasharray="2 1.500"')],
 ['线', P('M10 16h20')], ['虚线', P('M10 16h20', 1.6, 'stroke-dasharray="2 1.500"')],
 ['滑音', P('M14 23q1-3 3-3t2-4 3-4 2-3 3-2', 3.2)], ['弯音', P('M12 23q12 0 13-13', 1.5) + tip.u(25, 8)],
 ['折线', P('M11 22l9-11 9 11', 1.3)], ['制表', N(13, 21, 10) + P('M17 20l8-7M26 24V12q1-3 4 0', 1.6) + H(28, 13)],
 ['自定义', P('M14 12l6-4 6 4v9l-6 4-6-4zM17 16h6', 1.4)]
], 'w-[43px] shrink-0 flex items-center justify-center');

const rest = n => Array.from({ length: n }, (_, i) => `<circle cx="${17 + (n - i) * 1.6}" cy="${(n > 2 ? 9 : 12) + i * (n > 3 ? 3.2 : 4.5)}" r="${n > 2 ? 1.7 : 2.4}"/>`).join('') + P('M25 9l-6 17', 1);
const fl = n => N(18, 22, 15) + Array.from({ length: n }, (_, i) => P(`M21 ${7 + i * 2.5}q1 4 5 6v4`, 1.1)).join('');
const pc = 'h-9 flex items-center justify-center overflow-hidden';
B('notes', [
 ['橡皮', F('M9 22l6-7h10l-5 7z', '#eee') + P('M9 22l6-7h10l-5 7z', .8) + F('M15 15l5-5h11l-5 5zM26 15l5-5v4l-9 9v-3z', '#444')],
 ['重打', '<ellipse cx="20" cy="16" rx="4.500" ry="3" fill="none" stroke="#111" stroke-width="2.200"/>' + F('M14 10h12l-6-4zM14 22h12l-6 4z')],
 ['倍全音符', '<ellipse cx="20" cy="16" rx="4.500" ry="3" fill="none" stroke="#111" stroke-width="2.500"/>' + P('M12 11v10M14.500 11v10M25.500 11v10M28 11v10', 1.3)],
 ['全音符', '<ellipse cx="20" cy="16" rx="5" ry="3" fill="none" stroke="#111" stroke-width="2.600"/>'],
 ['二分音符', '<ellipse cx="20" cy="22" rx="3.500" ry="2.300" fill="none" stroke="#111" stroke-width="1.200" transform="rotate(-25 20 22)"/>' + P('M23 22V7', 1.4)],
 ['四分音符', N(20, 22, 15)], ['八分', fl(1)], ['十六分', fl(2)], ['三十二分', fl(3)], ['六十四分', fl(4)], ['一百二十八分', fl(5)],
 ['附点', '<circle cx="19" cy="16" r="2.500"/>'],
 ['升号', P('M17 9v16M22 7v16', 1.4) + P('M15 14l9-2M15 20l9-2', 2.8)], ['降号', flat(18, 21)], ['还原号', P('M17 8v12l6-1M23 24V12l-6 1', 2)],
 ['升半音', T('+½', 20, 22, 20, `font-family="Liberation Sans"`)], ['降半音', T('-½', 20, 22, 20, `font-family="Liberation Sans"`)],
 ['延音', N(13, 19, 11) + N(25, 19, 11) + P('M13 23q7 4 13 0', 1.2)],
 ['三连音', N(12, 24, 10) + N(20, 22, 10) + N(28, 19, 10) + P('M14 14l18-5', 3) + T('3', 20, 8, 8)],
 ['倚音', N(17, 22, 13) + P('M20 9q1 4 7 8M15 17l12-5', 1.2)]
], pc);
B('rests', [
 ['倍全休止', F('M16 13h8v7h-8z') + P('M13 12.500h14M13 20.500h14')], ['全休止', P('M13 14h14') + F('M16 14h8v4h-8z')], ['二分休止', P('M13 20h14') + F('M16 16h8v4h-8z')],
 ['四分休止', P('M18 8l4 5-3 5 4 4q-6-2-4 3', 2.4)], ['八分休止', rest(1)], ['十六分休止', rest(2)], ['三十二分休止', rest(3)], ['六十四分休止', rest(4)], ['一百二十八分休止', rest(5)]
], pc);

let hr = '', vr = '';
for (let k = 0; k <= 135; k++) {
  const x = Math.round(105.5 + k * 10.8), h = k % 16 == 0 ? 17 : k % 8 == 0 ? 9 : k % 4 == 0 ? 6 : k % 2 == 0 ? 4 : 2;
  hr += `<rect x="${x}" y="${17 - h}" width="1.500" height="${h}"/>` + (k % 16 ? '' : `<text x="${x + 3}" y="12" font-size="14">${k / 16}</text>`);
}
for (let k = 0; k <= 82; k++) {
  const y = Math.round(-7 + k * 10.8), w = k % 16 == 0 ? 16 : k % 8 == 0 ? 9 : k % 4 == 0 ? 6 : k % 2 == 0 ? 4 : 2;
  vr += `<rect x="${16 - w}" y="${y}" width="${w}" height="1.500"/>` + (k % 16 ? '' : `<text transform="translate(12 ${Math.max(y + 11, 9)}) rotate(-90)" font-size="13">${k / 16}</text>`);
}
$('hr').innerHTML = hr; $('vr').innerHTML = vr;

const staff = (x, ys) => ys.map(y => `<rect x="${x}" y="${y}" width="${1000 - x}" height="1.500"/>`).join('');
const sq = (x, y) => `<rect x="${x}" y="${y}" width="8" height="8" fill="none" stroke="#666" stroke-width="1.500"/>`;
const r = (x, y) => `<rect x="${x}" y="${y}" width="16" height="8"/>`;
const t = (s, x, y, z, c, a = 'start') => `<text x="${x}" y="${y}" font-size="${z}" fill="${c}" text-anchor="${a}">${s}</text>`;
const num = (s, x, y) => `<text x="${x}" y="${y}" font-size="20" font-style="italic" text-anchor="middle">${s}</text>`;
const four = y => `<g font-size="36" font-weight="bold" text-anchor="middle"><text x="525" y="${y + 25}">4</text><text x="525" y="${y + 50}">4</text></g>`;
$('score').innerHTML =
  t('Score', 367, 248, 29, '#111') + t('Title', 973, 279, 56, '#808080', 'middle') + t('Subtitle', 972, 345, 43, '#808080', 'middle') +
  t('Composer', 1576, 336, 29, '#808080', 'end') + t('Arranger', 1576, 379, 29, '#808080', 'end') +
  t('Soprano', 416, 478, 29, '#111', 'end') + t('Piano', 417, 700, 29, '#2a4f86', 'end') + t('S', 314, 963, 29, '#111') +
  staff(454, [444, 456, 469, 481, 493]) + staff(454, [592, 604, 617, 629, 641]) + staff(454, [739, 751, 764, 776, 788]) + staff(367, [928, 942, 954, 966, 977]) +
  '<rect x="453.500" y="444" width="1.500" height="346"/><rect x="367" y="928" width="1.500" height="120"/><rect x="764.500" y="444" width="1.500" height="50"/><rect x="705.500" y="928" width="1.500" height="51"/><rect x="764.500" y="592" width="1.500" height="197" fill="#3c5f9a"/>' +
  treble(467, 423) + treble(467, 571) + treble(381, 907) + bass(466, 740) + four(444) + four(592) + four(740) +
  r(644, 457) + r(871, 457) + r(644, 605) + r(871, 605) + r(644, 752) + r(871, 752) + r(553, 942) + r(843, 942) +
  '<path d="M449 593C432 620 438 645 445 665C448 680 442 687 437 691C442 695 448 702 445 717C438 737 432 762 449 788C437 762 440 740 447 717C450 702 444 695 439 691C444 687 450 680 447 665C440 645 437 620 449 593Z" fill="#2a4f86" stroke="#2a4f86" stroke-width="1"/>' +
  num('1', 462, 422) + num('1', 462, 570) + num('2', 766, 430) + num('2', 766, 578) + num('5', 375, 906) + num('6', 706, 914) +
  sq(454, 418) + sq(454, 565) + sq(762, 426) + sq(761, 440) + sq(762, 573) + sq(366, 902) + sq(702, 909) + sq(701, 924) +
  '<path d="M1289 420l4 12" stroke="#888"/>';
</script>
</body>
</html>
